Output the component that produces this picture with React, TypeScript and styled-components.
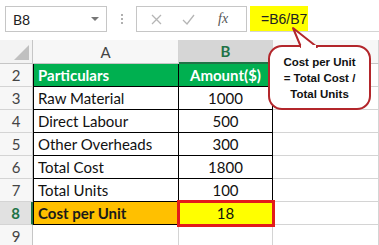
import React from "react";
import styled, { createGlobalStyle } from "styled-components";

const GlobalStyle = createGlobalStyle`
  html, body { margin: 0; padding: 0; background: #fff; }
  body { font-family: Lato, "Liberation Sans", sans-serif; }
  * { box-sizing: border-box; }
`;

const Page = styled.div`
  position: relative;
  width: 379px;
  height: 245px;
  overflow: hidden;
  background: #fff;
`;

const FormulaBar = styled.div`
  display: flex;
  align-items: center;
  height: 40px;
  padding: 0 0 2px 5px;
`;

const NameBox = styled.div`
  display: flex;
  align-items: center;
  justify-content: space-between;
  width: 102px;
  height: 26px;
  border: 1px solid #c6c6c6;
  padding: 0 7px 0 7px;
  font-size: 14px;
  color: #222;
`;

const Caret = styled.span`
  width: 0;
  height: 0;
  border-left: 4px solid transparent;
  border-right: 4px solid transparent;
  border-top: 4px solid #777;
`;

const Dots = styled.div`
  display: flex;
  flex-direction: column;
  gap: 2px;
  margin: 0 13px 0 14px;
  span {
    width: 2px;
    height: 2px;
    background: #b0b0b0;
  }
`;

const ButtonsBox = styled.div`
  display: flex;
  align-items: center;
  width: 111px;
  height: 26px;
  border: 1px solid #c6c6c6;
  padding: 0 0 0 14px;
  gap: 20px;
`;

const Fx = styled.span`
  font-family: "Liberation Serif", serif;
  font-style: italic;
  font-size: 14px;
  color: #555;
  margin-left: 3px;
`;

const FormulaInput = styled.div`
  flex: 1;
  height: 26px;
  margin-left: 3px;
  border-bottom: 1px solid #d4d4d4;
  display: flex;
`;

const Highlight = styled.div`
  background: #ffff00;
  width: 58px;
  height: 100%;
  display: flex;
  align-items: center;
  padding-left: 11px;
  font-family: "Liberation Sans", sans-serif;
  font-size: 14px;
  color: #222;
`;

const Grid = styled.div`
  display: grid;
  grid-template-columns: 33px 146px 94px 106px;
  grid-template-rows: 24px repeat(8, 23px);
`;

type Kind = "corner" | "colhead" | "colheadSel" | "rowhead" | "rowheadSel" | "data" | "head" | "orange" | "yellow" | "empty";

const Cell = styled.div<{ $kind: Kind; $align?: "left" | "center"; $first?: boolean }>`
  position: relative;
  display: flex;
  align-items: center;
  justify-content: ${(p) => (p.$align === "center" ? "center" : "flex-start")};
  padding: 0 4px;
  font-size: 15px;
  white-space: nowrap;
  color: #111;
  border-right: 1px solid ${(p) =>
    ["data", "head", "orange", "yellow"].includes(p.$kind) ? "#000" : "#d4d4d4"};
  border-bottom: 1px solid ${(p) =>
    ["data", "head", "orange", "yellow"].includes(p.$kind) ? "#000" : "#d4d4d4"};
  ${(p) => p.$first && "border-left: 1px solid #000;"}
  ${(p) => {
    switch (p.$kind) {
      case "corner":
        return "background:#f3f3f3; border-right-color:#c6c6c6; border-bottom-color:#c6c6c6;";
      case "colhead":
        return "background:#f7f7f7; color:#444; justify-content:center; border-bottom-color:#c6c6c6;";
      case "colheadSel":
        return "background:#d6d6d6; color:#217346; font-weight:700; justify-content:center; border-bottom:2px solid #217346;";
      case "rowhead":
        return "background:#f7f7f7; color:#444; justify-content:center; border-right-color:#c6c6c6;";
      case "rowheadSel":
        return "background:#e1e1e1; color:#217346; font-weight:700; justify-content:center; border-right:2px solid #217346;";
      case "head":
        return "background:#00b050; color:#fff; font-weight:700;";
      case "orange":
        return "background:#ffc000; font-weight:700; color:#1a1a1a;";
      case "yellow":
        return "background:#ffff00; outline:3px solid #e31b1b; outline-offset:-1px; z-index:1;";
      default:
        return "";
    }
  }}
`;

const CornerTriangle = styled.span`
  position: absolute;
  right: 3px;
  bottom: 3px;
  width: 0;
  height: 0;
  border-left: 15px solid transparent;
  border-bottom: 15px solid #c0c0c0;
`;

const Callout = styled.div`
  position: absolute;
  left: 268px;
  top: 45px;
  width: 103px;
  height: 65px;
  border: 2px solid #b3262b;
  border-radius: 14px;
  background: #fff;
  display: flex;
  flex-direction: column;
  align-items: center;
  justify-content: center;
  font-family: "Liberation Sans", sans-serif;
  font-weight: 700;
  font-size: 11.5px;
  line-height: 16px;
  color: #111;
  z-index: 3;
`;

const Tail = styled.svg`
  position: absolute;
  left: 285px;
  top: 24px;
  z-index: 4;
  overflow: visible;
`;

const rows: { n: number; a: string; b: string; kind: Kind }[] = [
  { n: 2, a: "Particulars", b: "Amount($)", kind: "head" },
  { n: 3, a: "Raw Material", b: "1000", kind: "data" },
  { n: 4, a: "Direct Labour", b: "500", kind: "data" },
  { n: 5, a: "Other Overheads", b: "300", kind: "data" },
  { n: 6, a: "Total Cost", b: "1800", kind: "data" },
  { n: 7, a: "Total Units", b: "100", kind: "data" },
];

export default function App() {
  return (
    <Page>
      <GlobalStyle />
      <FormulaBar>
        <NameBox>
          <span>B8</span>
          <Caret />
        </NameBox>
        <Dots>
          <span />
          <span />
          <span />
        </Dots>
        <ButtonsBox>
          <svg width="11" height="11" viewBox="0 0 11 11">
            <path d="M1 1L10 10M10 1L1 10" stroke="#b5b5b5" strokeWidth="1.3" />
          </svg>
          <svg width="13" height="11" viewBox="0 0 13 11">
            <path d="M1 6L5 10L12 1" stroke="#b5b5b5" strokeWidth="1.3" fill="none" />
          </svg>
          <Fx>fx</Fx>
        </ButtonsBox>
        <FormulaInput>
          <Highlight>=B6/B7</Highlight>
        </FormulaInput>
      </FormulaBar>
      <Grid>
        <Cell $kind="corner">
          <CornerTriangle />
        </Cell>
        <Cell $kind="colhead">A</Cell>
        <Cell $kind="colheadSel">B</Cell>
        <Cell $kind="colhead" />
        {rows.map((r) => (
          <React.Fragment key={r.n}>
            <Cell $kind="rowhead">{r.n}</Cell>
            <Cell $kind={r.kind} $first>
              {r.a}
            </Cell>
            <Cell $kind={r.kind} $align="center">
              {r.b}
            </Cell>
            <Cell $kind="empty" />
          </React.Fragment>
        ))}
        <Cell $kind="rowheadSel">8</Cell>
        <Cell $kind="orange" $first>
          Cost per Unit
        </Cell>
        <Cell $kind="yellow" $align="center">
          18
        </Cell>
        <Cell $kind="empty" />
        <Cell $kind="rowhead">9</Cell>
        <Cell $kind="empty" />
        <Cell $kind="empty" />
        <Cell $kind="empty" />
      </Grid>
      <Tail width="40" height="24">
        <path d="M8 4 L16 23 L32 23 Z" fill="#fff" stroke="#b3262b" strokeWidth="2" strokeLinejoin="round" />
        <rect x="16" y="21" width="15" height="5" fill="#fff" />
      </Tail>
      <Callout>
        <span>Cost per Unit</span>
        <span>= Total Cost /</span>
        <span>Total Units</span>
      </Callout>
    </Page>
  );
}
